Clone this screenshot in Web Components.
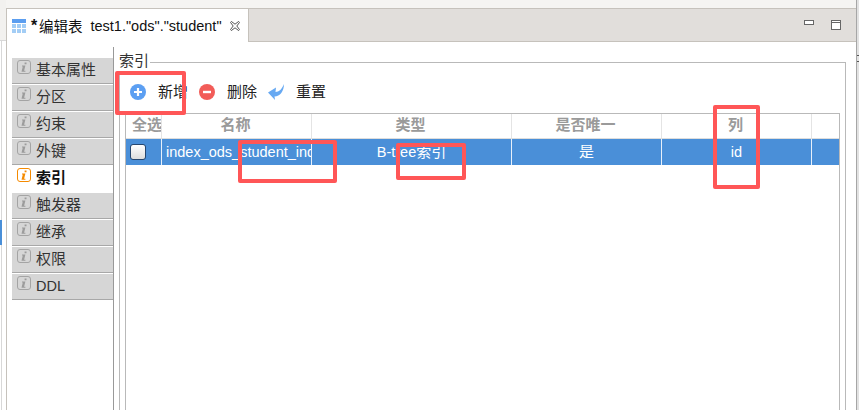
<!DOCTYPE html>
<html><head><meta charset="utf-8"><style>
html,body{margin:0;padding:0;background:#fff;width:859px;height:410px;overflow:hidden}
</style></head><body>
<editor-window></editor-window>
<script>
const FONT='"Liberation Sans","Noto Sans CJK SC",sans-serif';
function def(name,html,init){customElements.define(name,class extends HTMLElement{constructor(){super();this.attachShadow({mode:'open'}).innerHTML=html;}connectedCallback(){init&&init(this)}});}
const info=(c,fg,w)=>`<svg width="14" height="14" viewBox="0 0 14 14" style="display:block"><rect x="0.5" y="0.5" width="13" height="13" rx="2.5" fill="${w}" stroke="${c}"/><path d="M7.6 2.400h1.900v1.900H7.600zM5 5.600h3.400l-1.300 5.200h1.300v1H4.500l1.300-5.200H5z" fill="${fg}"/></svg>`;
def('side-tab',`<style>
:host{display:flex;height:25px;background:#d6d6d6;border-bottom:1px solid #a8a8a8;margin-bottom:1px;padding-left:5px;gap:5px;font:15px ${FONT};color:#333}
:host([active]){background:#fff;border-bottom-color:#fff;font-weight:bold;color:#111}
span{line-height:20px;margin-top:2px;white-space:nowrap}
i{display:block;margin-top:2px}
</style><i></i><span><slot></slot></span>`,el=>{const a=el.hasAttribute('active');el.shadowRoot.querySelector('i').innerHTML=a?info('#f58a00','#f58a00','#fff'):info('#a4a4a4','#9c9c9c','#d6d6d6');});
def('tool-btn',`<style>
:host{display:flex;align-items:center;font:15px ${FONT};color:#222;gap:12px}
span{margin-bottom:4px}
</style><slot name="icon"></slot><span><slot></slot></span>`);
def('red-mark',`<style>:host{display:block;position:absolute;box-sizing:border-box;border:4px solid #ff5657;border-radius:2px;pointer-events:none}</style>`);
def('index-table',`<style>
:host{display:block;margin:0;border:1px solid #b9b9b9;border-bottom:0;flex:1;font:14.5px ${FONT}}
.row{display:grid;grid-template-columns:36px 150px 200px 150px 150px 1fr}
.head{height:24px;border-bottom:1px solid #ddd;color:#9a9a9a;font-weight:bold;font-size:15px}
.head div{border-right:1px solid #e4e4e4;text-align:center;line-height:22px;overflow:hidden;white-space:nowrap;padding-right:2px}
.body{height:26px;background:#4a8fd8;color:#fff}
.body div{border-right:1px solid #e8f0fa;text-align:center;line-height:26px;overflow:hidden;white-space:nowrap}
.body div:last-child,.head div:last-child{border-right:0}
.body .l{text-align:left;padding-left:4px}
.c{font-size:15px}
.cb{width:14px;height:14px;margin:5px 0 0 4px;background:linear-gradient(#fff,#ddd);border:1px solid #26466e;border-radius:3px;display:block}
</style>
<div class="row head"><div style="text-align:left;padding:0 0 0 6px">全选</div><div>名称</div><div>类型</div><div>是否唯一</div><div>列</div><div></div></div>
<div class="row body"><div><span class="cb"></span></div><div class="l">index_ods_student_index</div><div>B-tree<span class="c">索引</span></div><div class="c">是</div><div>id</div><div></div></div>`);
def('editor-window',`<style>
:host{display:grid;grid-template-columns:6px 1fr 3px;position:relative;width:859px;height:410px;overflow:hidden;font:14.5px ${FONT}}
.lstrip{position:relative;background:linear-gradient(#f2f1ef 0 40px,#d8d8d8 40px 41px,#fff 41px)}
.lstrip::before{content:"";position:absolute;left:1px;top:41px;bottom:0;width:1px;background:#d8d8d8}
.lstrip::after{content:"";position:absolute;left:0;top:220px;width:2px;height:25px;background:#4a8fd8}
.rstrip{position:relative;box-sizing:border-box;border-left:1px solid #a6a6a6;background:#e2e2e2}
.rstrip::after{content:"";position:absolute;left:0;right:0;top:55px;height:5px;border-top:1px solid #555;border-bottom:1px solid #555}
.center{display:flex;flex-direction:column;min-width:0;height:410px}
.top{height:8px;background:#f5f4f2;border-bottom:1px solid #c6c2bc;flex:none}
.bar{height:32px;background:#e1dedb;border-bottom:1px solid #c6c2bc;display:flex;align-items:flex-start;justify-content:space-between;flex:none}
.tab{height:33px;width:243px;background:#fff;border-right:1px solid #c6c2bc;border-left:1px solid #c6c2bc;display:flex;align-items:center;box-sizing:border-box;padding-left:5px;color:#111;white-space:pre}
.tab svg{flex:none}
.star{font-weight:bold;font-size:16px;margin:0 1px 0 5px;width:7px}
.cjk{font-size:14.500px}
.ctl{display:flex;gap:17px;margin:11px 15px 0 0;align-items:flex-start}
.main{flex:1;border-left:1px solid #c6c2bc;display:flex;min-height:0}
.side{width:107px;border-right:1px solid #999;margin-top:5px;padding:11px 0 0 5px;box-sizing:border-box;flex:none}
.grp{position:relative;margin:20px 0 0 5px;width:727px;border:1px solid #b9b9b9;border-bottom:0;box-sizing:border-box;display:flex;flex-direction:column;padding:0 5px}
.legend{position:absolute;left:-1px;top:-11px;background:#fff;padding-right:1px;font-size:15px;line-height:18px;color:#333;height:19px}
.tools{height:50px;box-sizing:border-box;padding:8px 0 0 5px;display:flex;align-items:center;gap:11px;flex:none}
</style>
<div class="lstrip"></div>
<div class="center">
<div class="top"></div>
<div class="bar">
 <div class="tab"><svg width="14" height="14" viewBox="0 0 14 14"><rect width="14" height="4" fill="#5b9ef0"/><g fill="#a3cdf5"><rect y="5" width="4" height="4"/><rect x="5" y="5" width="4" height="4"/><rect x="10" y="5" width="4" height="4"/><rect y="10" width="4" height="4"/><rect x="5" y="10" width="4" height="4"/><rect x="10" y="10" width="4" height="4"/></g></svg><span class="star">*</span><span class="cjk">编辑表</span><span style="margin-left:8px">test1."ods"."student"</span><svg width="10" height="10" viewBox="0 0 11 11" style="margin-left:8px"><path d="M1.500.5l4 3 4-3 1 1-3 4 3 4-1 1-4-3-4 3-1-1 3-4-3-4z" fill="none" stroke="#444"/></svg></div>
 <div class="ctl"><svg width="10" height="5" style="display:block"><rect x=".5" y=".5" width="9" height="4" fill="#fff" stroke="#666"/></svg><svg width="10" height="10" style="display:block"><rect x=".5" y=".5" width="9" height="9" fill="#fff" stroke="#666"/><path d="M0 2.500h10" stroke="#666"/></svg></div>
</div>
<div class="main">
 <div class="side">
  <side-tab>基本属性</side-tab><side-tab>分区</side-tab><side-tab>约束</side-tab><side-tab>外键</side-tab><side-tab active>索引</side-tab><side-tab>触发器</side-tab><side-tab>继承</side-tab><side-tab>权限</side-tab><side-tab style="font-size:14.5px">DDL</side-tab>
 </div>
 <div class="grp"><div class="legend">索引</div>
  <div class="tools">
   <tool-btn><svg slot="icon" width="16" height="16" style="display:block"><circle cx="8" cy="8" r="8" fill="#5c9ff2"/><path d="M4 8h8M8 4v8" stroke="#fff" stroke-width="2.200"/></svg>新增</tool-btn>
   <tool-btn><svg slot="icon" width="16" height="16" style="display:block"><circle cx="8" cy="8" r="8" fill="#f25c58"/><path d="M4 8h8" stroke="#fff" stroke-width="2.400"/></svg>删除</tool-btn>
   <tool-btn><svg slot="icon" width="16" height="16" style="display:block"><path d="M16 0C16 7 12 12.500 6.500 12.500L7 16 0 8.500 8 3.500 7.500 8C11 8 14 5 16 0z" fill="#67a9f2"/></svg>重置</tool-btn>
  </div>
  <index-table></index-table>
 </div>
</div>
</div>
<div class="rstrip"></div>
<red-mark style="left:115px;top:71px;width:71px;height:44px"></red-mark>
<red-mark style="left:238px;top:140px;width:99px;height:43px"></red-mark>
<red-mark style="left:396px;top:143px;width:70px;height:37px"></red-mark>
<red-mark style="left:713px;top:105px;width:47px;height:84px"></red-mark>
`);
</script></body></html>
